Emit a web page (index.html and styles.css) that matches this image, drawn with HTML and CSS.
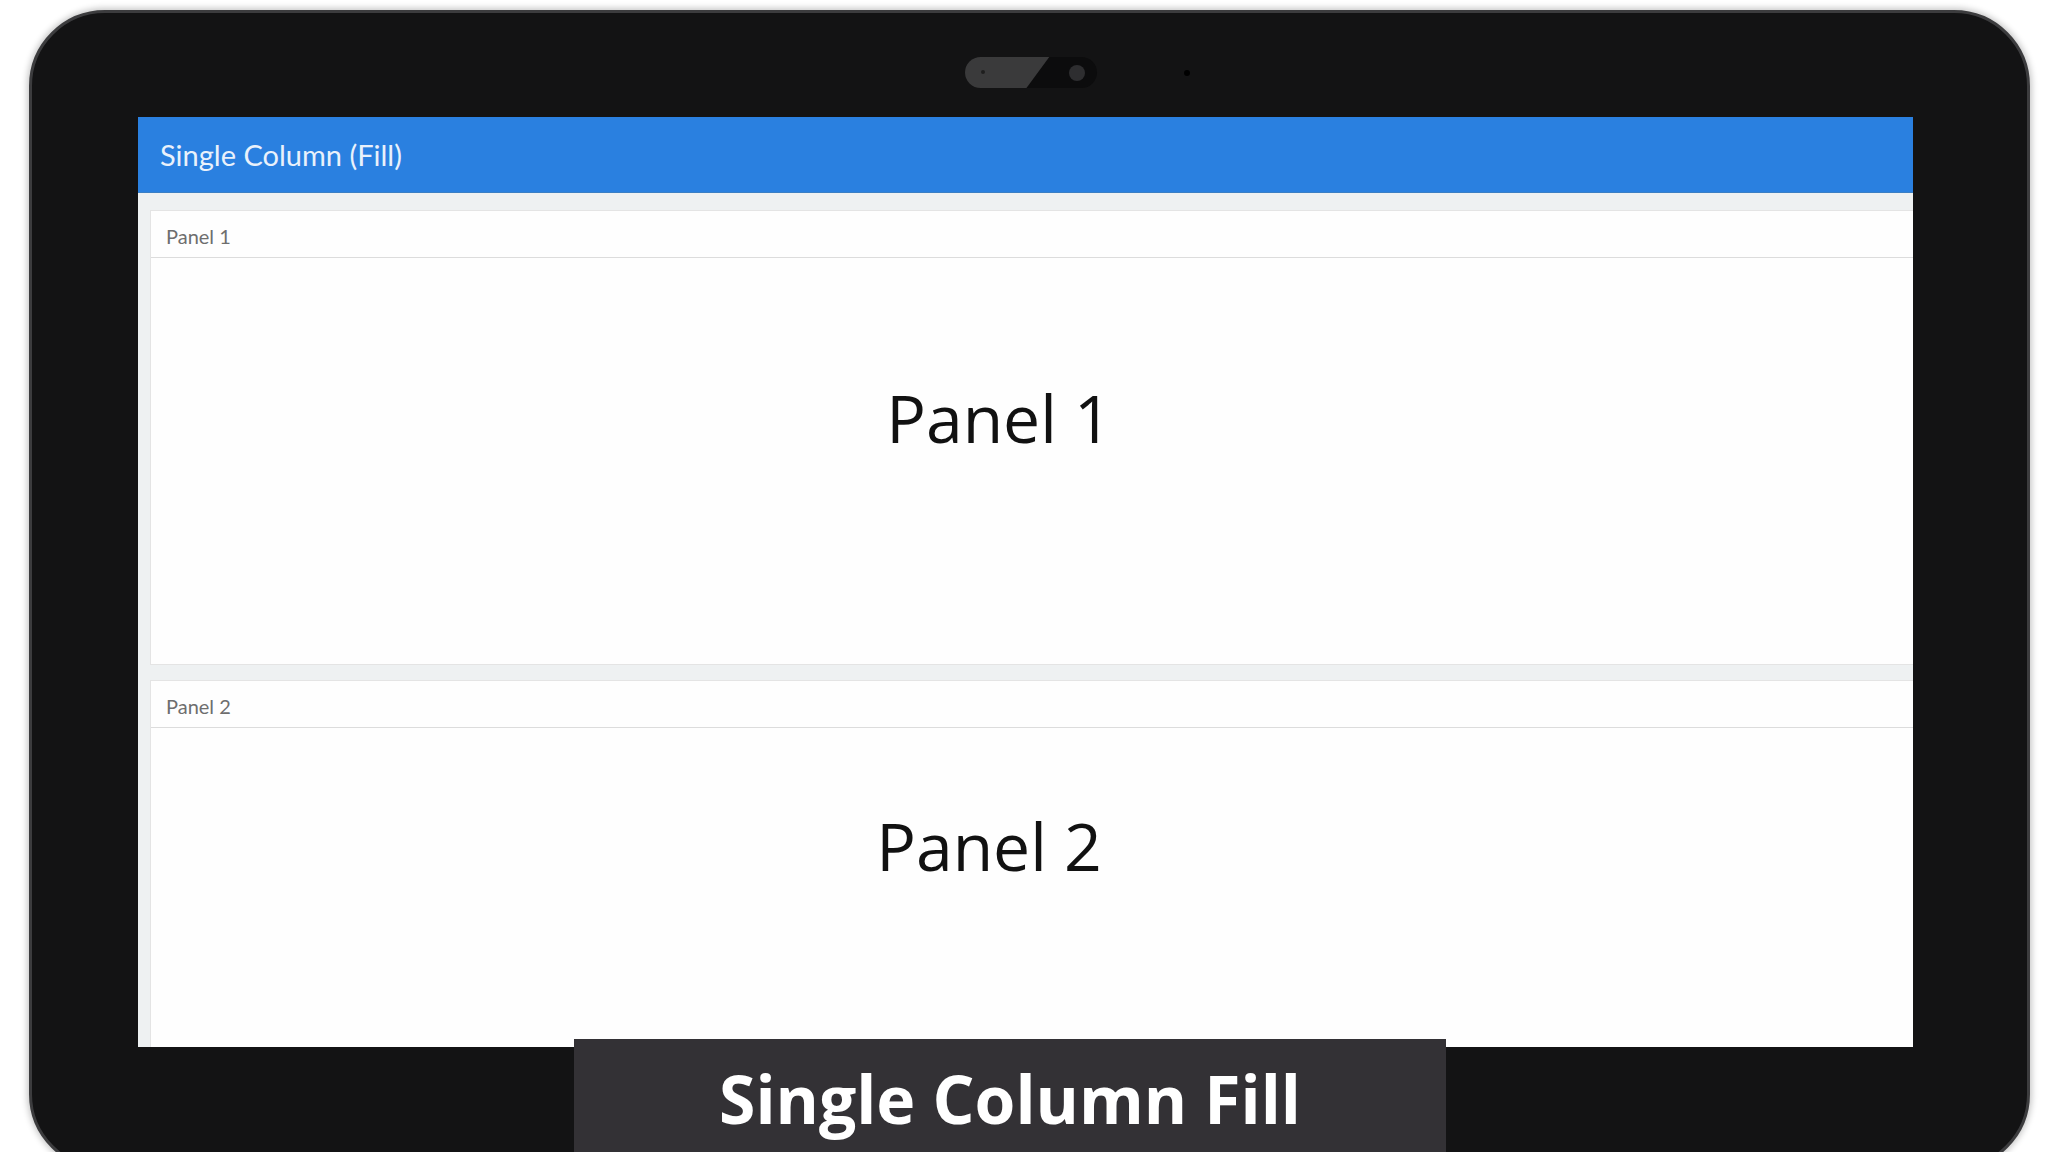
FILE: index.html
```html
<!DOCTYPE html>
<html lang="en">
<head>
<meta charset="utf-8">
<title>Single Column Fill</title>
<link rel="stylesheet" href="styles.css">
</head>
<body>
<div class="device">
  <svg class="camera" width="240" height="34" viewBox="0 0 240 34" aria-hidden="true">
    <defs>
      <clipPath id="pill"><rect x="3" y="1" width="132" height="31" rx="15.5"/></clipPath>
    </defs>
    <rect x="3" y="1" width="132" height="31" rx="15.5" fill="#0c0c0d"/>
    <polygon points="0,0 88,0 63,34 0,34" fill="#3a3a3b" clip-path="url(#pill)"/>
    <circle cx="21" cy="16" r="2" fill="#1e1e1e"/>
    <circle cx="115" cy="17" r="8" fill="#2e2e30"/>
    <circle cx="225" cy="17" r="3" fill="#000"/>
  </svg>
  <div class="screen">
    <header class="appbar">Single Column (Fill)</header>
    <main class="content">
      <section class="panel panel-first">
        <div class="panel-head">Panel 1</div>
        <div class="panel-body body-first">Panel 1</div>
      </section>
      <section class="panel panel-second">
        <div class="panel-head">Panel 2</div>
        <div class="panel-body body-second">Panel 2</div>
      </section>
    </main>
  </div>
  <div class="caption">Single Column Fill</div>
</div>
</body>
</html>
```

FILE: styles.css
```css
html, body {
  margin: 0;
  padding: 0;
  background: #ffffff;
  overflow: hidden;
}

body {
  width: 2048px;
  height: 1152px;
  padding-top: 10px;
  box-sizing: border-box;
}

.device {
  position: relative;
  margin-left: 29px;
  width: 2001px;
  height: 1160px;
  box-sizing: border-box;
  border: 3px solid #3c3c3e;
  border-radius: 76px;
  background: #131314;
  box-shadow: 0 0 6px 2px rgba(0, 0, 0, 0.22);
  padding: 43px 114px 0 106px;
  display: flex;
  flex-direction: column;
}

.camera {
  display: block;
  margin-left: 824px;
  flex: none;
}

.screen {
  margin-top: 27px;
  width: 1775px;
  height: 930px;
  background: #eff1f2;
  display: flex;
  flex-direction: column;
  overflow: hidden;
  flex: none;
}

.appbar {
  height: 76px;
  flex: none;
  background: #2a80e0;
  color: #e9f1fb;
  font-family: Lato, "Open Sans", sans-serif;
  font-size: 29px;
  display: flex;
  align-items: center;
  padding-left: 22px;
  border-bottom: 1px solid #3b7fc4;
  box-sizing: border-box;
}

.content {
  flex: 1;
  display: flex;
  flex-direction: column;
  gap: 15px;
  padding: 17px 0 0 12px;
  background: #eef1f2;
  min-height: 0;
}

.panel {
  background: #fefefe;
  border: 1px solid #e4e4e4;
  border-right: none;
  display: flex;
  flex-direction: column;
}

.panel-first {
  height: 455px;
  box-sizing: border-box;
  flex: none;
}

.panel-second {
  flex: 1;
  border-bottom: none;
  min-height: 0;
}

.panel-head {
  height: 47px;
  flex: none;
  border-bottom: 1px solid #dcdcdc;
  display: flex;
  align-items: center;
  padding-left: 15px;
  padding-top: 3px;
  box-sizing: border-box;
  font-family: Lato, "Open Sans", sans-serif;
  font-size: 20px;
  color: #6e6e6e;
}

.panel-body {
  flex: 1;
  font-family: "Open Sans", Lato, sans-serif;
  font-size: 66px;
  color: #111111;
  text-align: center;
}

.body-first {
  padding-top: 114px;
  padding-right: 66px;
}

.body-second {
  padding-top: 72px;
  padding-right: 86px;
}

.caption {
  position: absolute;
  left: 542px;
  top: 1026px;
  width: 872px;
  height: 130px;
  background: #333135;
  color: #ffffff;
  font-family: "Open Sans", sans-serif;
  font-weight: 700;
  font-size: 66px;
  text-align: center;
  padding-top: 14px;
  box-sizing: border-box;
}
```
